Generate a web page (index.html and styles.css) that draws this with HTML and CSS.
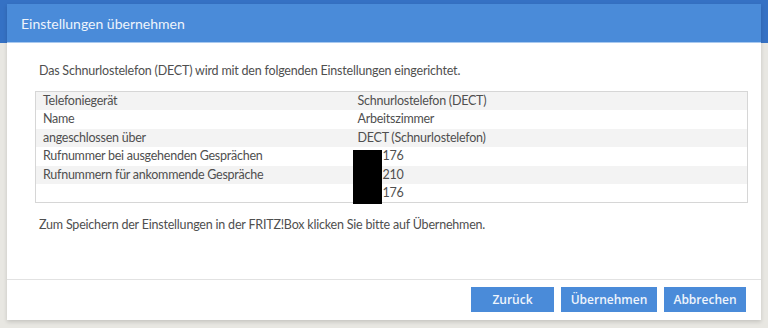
FILE: index.html
```html
<!DOCTYPE html>
<html lang="de">
<head>
<meta charset="utf-8">
<title>Einstellungen übernehmen</title>
<link rel="stylesheet" href="styles.css">
</head>
<body>
<div class="page">
  <div class="dialog">
    <div class="dialog-header">Einstellungen übernehmen</div>
    <div class="dialog-body">
      <p class="intro">Das Schnurlostelefon (DECT) wird mit den folgenden Einstellungen eingerichtet.</p>
      <div class="table-wrap">
        <table class="summary">
          <tr><td class="label">Telefoniegerät</td><td>Schnurlostelefon (DECT)</td></tr>
          <tr><td class="label">Name</td><td>Arbeitszimmer</td></tr>
          <tr><td class="label">angeschlossen über</td><td>DECT (Schnurlostelefon)</td></tr>
          <tr><td class="label">Rufnummer bei ausgehenden Gesprächen</td><td class="num">176</td></tr>
          <tr><td class="label">Rufnummern für ankommende Gespräche</td><td class="num">210</td></tr>
          <tr><td class="label"></td><td class="num">176</td></tr>
        </table>
        <div class="redact"></div>
      </div>
      <p class="note">Zum Speichern der Einstellungen in der FRITZ!Box klicken Sie bitte auf Übernehmen.</p>
    </div>
    <div class="dialog-footer">
      <button class="btn">Zurück</button>
      <button class="btn">Übernehmen</button>
      <button class="btn">Abbrechen</button>
    </div>
  </div>
</div>
</body>
</html>
```
FILE: styles.css
```css
* { box-sizing: border-box; }
html, body { margin: 0; padding: 0; }
body {
  width: 768px;
  height: 328px;
  overflow: hidden;
  font-family: "Lato", "Open Sans", sans-serif;
  color: #4f4f4f;
  background: linear-gradient(to bottom, #3571c4 0, #3571c4 43px, #e8e7e2 43px, #e8e7e2 100%);
}
.page {
  padding: 4px 7px 8px 7px;
}
.dialog {
  width: 754px;
  height: 316px;
  background: #fff;
  display: flex;
  flex-direction: column;
  box-shadow: 0 2px 4px rgba(0,0,0,0.15);
}
.dialog-header {
  height: 39px;
  background: #4a8bd9;
  border-bottom: 1px solid #a9c9ef;
  color: #eef4fc;
  font-size: 14px;
  padding-left: 14px;
  display: flex;
  align-items: center;
}
.dialog-body {
  flex: 1;
  padding: 0 13px 0 28px;
  border-bottom: 1px solid #e2e2e2;
}
.intro {
  margin: 20px 0 12px 4px;
  font-size: 12.5px;
  line-height: 16px;
  letter-spacing: -0.2px;
}
.table-wrap {
  position: relative;
}
.summary {
  width: 713px;
  border-collapse: collapse;
  border: 1px solid #d6d6d6;
  font-size: 12.5px;
  letter-spacing: -0.25px;
}
.summary td {
  height: 18.5px;
  padding: 0 0 0 7px;
  line-height: 18px;
  vertical-align: middle;
}
.summary tr:nth-child(odd) { background: #f3f3f3; }
.summary td.label { width: 315px; }
.summary td.num { padding-left: 32px; }
.redact {
  position: absolute;
  left: 318px;
  top: 59px;
  width: 29px;
  height: 54px;
  background: #000;
}
.note {
  margin: 14px 0 0 4px;
  font-size: 12.5px;
  line-height: 16px;
  letter-spacing: -0.2px;
}
.dialog-footer {
  height: 40px;
  display: flex;
  justify-content: flex-end;
  align-items: flex-start;
  gap: 7px;
  padding: 7px 15px 0 0;
}
.btn {
  height: 25px;
  border: none;
  background: #4a8bd9;
  color: #eef4fc;
  font-family: "Open Sans", "Lato", sans-serif;
  font-size: 12px;
  font-weight: 600;
  padding: 0;
}
.btn:nth-child(1) { width: 83px; }
.btn:nth-child(2) { width: 96px; }
.btn:nth-child(3) { width: 82px; }
```
